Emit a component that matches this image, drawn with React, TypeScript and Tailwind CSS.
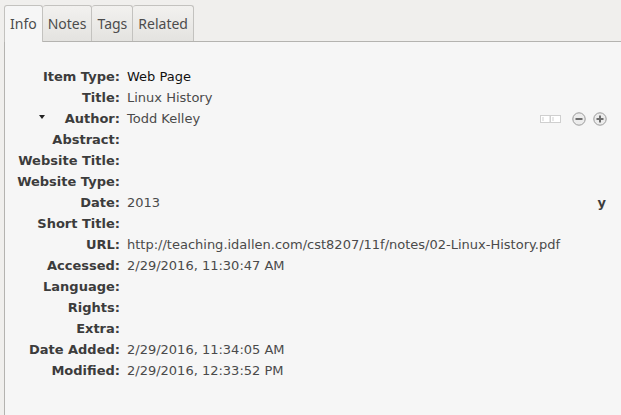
const rows: { label: string; value?: string; strong?: boolean }[] = [
  { label: "Item Type", value: "Web Page", strong: true },
  { label: "Title", value: "Linux History" },
  { label: "Author", value: "Todd Kelley" },
  { label: "Abstract" },
  { label: "Website Title" },
  { label: "Website Type" },
  { label: "Date", value: "2013" },
  { label: "Short Title" },
  { label: "URL", value: "http://teaching.idallen.com/cst8207/11f/notes/02-Linux-History.pdf" },
  { label: "Accessed", value: "2/29/2016, 11:30:47 AM" },
  { label: "Language" },
  { label: "Rights" },
  { label: "Extra" },
  { label: "Date Added", value: "2/29/2016, 11:34:05 AM" },
  { label: "Modified", value: "2/29/2016, 12:33:52 PM" },
];

const tabs = ["Info", "Notes", "Tags", "Related"];

function CircleButton({ plus }: { plus?: boolean }) {
  return (
    <svg width="14" height="14" viewBox="0 0 14 14">
      <circle cx="7" cy="7" r="6.2" fill="#ececec" stroke="#9a9a9a" strokeWidth="1" />
      <rect x="3.5" y="6" width="7" height="2" fill="#6d6d6d" />
      {plus && <rect x="6" y="3.5" width="2" height="7" fill="#6d6d6d" />}
    </svg>
  );
}

function SwitchIcon() {
  return (
    <svg width="21" height="8" viewBox="0 0 21 8">
      <rect x="0.5" y="0.5" width="9.5" height="7" fill="#fff" stroke="#cfcfcf" />
      <rect x="10.5" y="0.5" width="10" height="7" fill="#fff" stroke="#cfcfcf" />
      <rect x="2.5" y="2" width="1" height="4" fill="#cfcfcf" />
      <rect x="12.5" y="2" width="1" height="4" fill="#cfcfcf" />
    </svg>
  );
}

export default function App() {
  return (
    <div
      className="w-[621px] h-[415px] bg-[#f0efed] overflow-hidden flex flex-col"
      style={{ fontFamily: '"DejaVu Sans", "Noto Sans", sans-serif' }}
    >
      {/* Tab strip */}
      <div className="h-[41px] pl-[4px] pt-[4px] flex items-end font-['Noto_Sans',sans-serif]">
        {tabs.map((tab, i) => (
          <div
            key={tab}
            className={
              i === 0
                ? "h-[37px] px-[5px] pb-[2px] flex items-center border border-b-0 border-[#c3c2bf] rounded-t-[3px] bg-[#f6f6f6] text-[14px] text-[#4c4c4c] -mb-px z-10"
                : "h-[36px] px-[5px] pb-[1px] flex items-center border border-b-0 border-l-0 border-[#c3c2bf] rounded-t-[3px] bg-gradient-to-b from-[#f2f1ef] to-[#e4e3e0] text-[14px] text-[#4c4c4c]"
            }
          >
            {tab}
          </div>
        ))}
      </div>

      {/* Info panel */}
      <div className="flex-1 ml-[4px] border-l border-t border-[#b4b3b0] bg-[#f6f6f6] pt-[24px] pr-[14px]">
        {rows.map((row) => (
          <div key={row.label} className="h-[21px] flex items-center text-[13px]">
            <div className="w-[115px] shrink-0 flex items-center justify-end font-bold text-[#3c3c3c] relative">
              {row.label === "Author" && (
                <span className="absolute left-[34px] top-[6px] w-0 h-0 border-l-[3.5px] border-r-[3.5px] border-t-[4px] border-l-transparent border-r-transparent border-t-[#222]" />
              )}
              {row.label}:
            </div>
            <div
              className={
                row.strong
                  ? "ml-[7px] flex-1 text-[#111]"
                  : "ml-[7px] flex-1 text-[#4a4a4a]"
              }
            >
              {row.value}
            </div>
            {row.label === "Author" && (
              <div className="flex items-center gap-[7px]">
                <div className="mr-[4px] flex items-center">
                  <SwitchIcon />
                </div>
                <CircleButton />
                <CircleButton plus />
              </div>
            )}
            {row.label === "Date" && (
              <div className="font-bold text-[#3c3c3c] pr-[1px]">y</div>
            )}
          </div>
        ))}
      </div>
    </div>
  );
}
